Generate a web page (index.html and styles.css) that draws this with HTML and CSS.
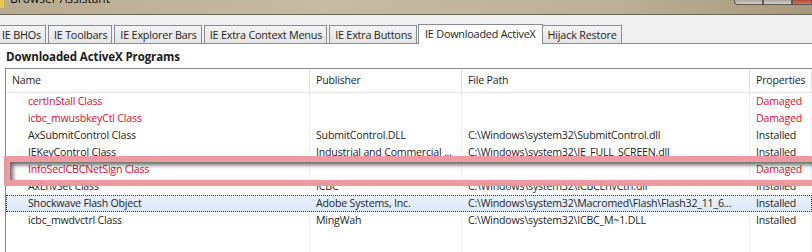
FILE: index.html
```html
<!DOCTYPE html>
<html lang="en">
<head>
  <meta charset="UTF-8">
  <title>Browser Assistant</title>
  <link rel="stylesheet" href="styles.css">
</head>
<body>
  <div class="window">
    <!-- title bar, mostly scrolled off the top -->
    <div class="titlebar">
      <span class="app-icon"></span>
      <span class="title">Browser Assistant</span>
      <div class="caption-btns">
        <span class="cap-btn"></span>
        <span class="cap-btn"></span>
        <span class="cap-btn close"></span>
      </div>
    </div>

    <div class="tabs">
      <div class="tab">IE BHOs</div>
      <div class="tab">IE Toolbars</div>
      <div class="tab">IE Explorer Bars</div>
      <div class="tab">IE Extra Context Menus</div>
      <div class="tab">IE Extra Buttons</div>
      <div class="tab active">IE Downloaded ActiveX</div>
      <div class="tab">Hijack Restore</div>
    </div>

    <div class="page">
      <h2>Downloaded ActiveX Programs</h2>

      <div class="list">
        <div class="row head">
          <div class="cell">Name</div>
          <div class="cell">Publisher</div>
          <div class="cell">File Path</div>
          <div class="cell">Properties</div>
        </div>
        <div class="row damaged">
          <div class="cell">certInStall Class</div>
          <div class="cell"></div>
          <div class="cell"></div>
          <div class="cell">Damaged</div>
        </div>
        <div class="row damaged">
          <div class="cell">icbc_mwusbkeyCtl Class</div>
          <div class="cell"></div>
          <div class="cell"></div>
          <div class="cell">Damaged</div>
        </div>
        <div class="row">
          <div class="cell">AxSubmitControl Class</div>
          <div class="cell">SubmitControl.DLL</div>
          <div class="cell">C:\Windows\system32\SubmitControl.dll</div>
          <div class="cell">Installed</div>
        </div>
        <div class="row">
          <div class="cell">IEKeyControl Class</div>
          <div class="cell">Industrial and Commercial ...</div>
          <div class="cell">C:\Windows\system32\IE_FULL_SCREEN.dll</div>
          <div class="cell">Installed</div>
        </div>
        <div class="row damaged">
          <div class="cell">InfoSecICBCNetSign Class</div>
          <div class="cell"></div>
          <div class="cell"></div>
          <div class="cell">Damaged</div>
        </div>
        <div class="row">
          <div class="cell">AxEnvSet Class</div>
          <div class="cell">ICBC</div>
          <div class="cell">C:\Windows\system32\ICBCEnvCtrl.dll</div>
          <div class="cell">Installed</div>
        </div>
        <div class="row selected">
          <div class="cell">Shockwave Flash Object</div>
          <div class="cell">Adobe Systems, Inc.</div>
          <div class="cell">C:\Windows\system32\Macromed\Flash\Flash32_11_6...</div>
          <div class="cell">Installed</div>
        </div>
        <div class="row">
          <div class="cell">icbc_mwdvctrl Class</div>
          <div class="cell">MingWah</div>
          <div class="cell">C:\Windows\system32\ICBC_M~1.DLL</div>
          <div class="cell">Installed</div>
        </div>
        <div class="row filler">
          <div class="cell"></div>
          <div class="cell"></div>
          <div class="cell"></div>
          <div class="cell"></div>
        </div>

        <!-- annotation frame drawn over the damaged entry -->
        <div class="mark"></div>
      </div>
    </div>
  </div>
</body>
</html>
```

FILE: styles.css
```css
body {
  margin: 0;
  background: #f0f0f0;
  font-family: "Open Sans", "Noto Sans", sans-serif;
  font-size: 10.6px;
  letter-spacing: -0.2px;
  color: #1e1e1e;
}

.window {
  width: 812px;
  height: 252px;
  overflow: hidden;
  display: flex;
  flex-direction: column;
  background: #f0f0f0;
}

/* title bar */
.titlebar {
  flex-shrink: 0;
  height: 14px;
  display: flex;
  align-items: flex-start;
  background: linear-gradient(90deg, #b9ab90, #c7bba3 40%, #bdb096 75%, #a8997c);
  border-bottom: 1px solid #6a655c;
  overflow: hidden;
}

.app-icon {
  width: 4px;
  height: 8px;
  background: #e8c84a;
}

.title {
  margin-left: 6px;
  margin-top: -9px;
  font-size: 12px;
  line-height: 16px;
  letter-spacing: 0;
  color: #111;
}

.caption-btns {
  margin-left: auto;
  display: flex;
  height: 5px;
}

.cap-btn {
  width: 27px;
  height: 4px;
  border: 1px solid #5c5a56;
  border-top: none;
  background: linear-gradient(#aaa59c, #d6d2ca);
}

.cap-btn:first-child {
  border-radius: 0 0 0 4px;
}

.cap-btn.close {
  width: 18px;
  background: linear-gradient(#b24a36, #d8745c);
}

/* tab strip */
.tabs {
  flex-shrink: 0;
  display: flex;
  align-items: flex-end;
  padding-top: 9px;
  border-bottom: 1px solid #898c95;
  height: 19px;
}

.tab {
  height: 17px;
  line-height: 17px;
  padding: 0 4px 0 5px;
  margin-right: 2px;
  border: 1px solid #898c95;
  border-bottom: none;
  background: linear-gradient(#f4f4f4, #e4e4e4);
  white-space: nowrap;
  font-size: 10.8px;
}

.tab:first-child {
  border-left: none;
  padding-left: 2px;
}

.tab.active {
  height: 19px;
  line-height: 17px;
  padding: 0 6px;
  margin: 0 -1px -1px -1px;
  background: #fff;
  position: relative;
  z-index: 1;
}

/* tab page */
.page {
  flex: 1;
  min-height: 0;
  background: #fff;
  padding: 6px 0 0 5px;
}

h2 {
  margin: 0 0 5px 1px;
  font-size: 11.5px;
  line-height: 13px;
  font-weight: bold;
  letter-spacing: -0.1px;
  color: #1a1a1a;
}

.list {
  position: relative;
  border: 1px solid #828790;
  border-right: none;
  background: #fff;
}

.row {
  display: grid;
  grid-template-columns: 304px 152px 288px 1fr;
  height: 17px;
  line-height: 17px;
}

.cell {
  padding-left: 6px;
  border-right: 1px solid #f0f0f0;
  white-space: nowrap;
  overflow: hidden;
}

.row .cell:first-child {
  padding-left: 22px;
}

.row.head {
  height: 23px;
  line-height: 23px;
  border-bottom: 1px solid #e5e5e5;
}

.row.head .cell {
  border-right-color: #e3e3e3;
}

.row.head .cell:first-child {
  padding-left: 6px;
}

.row.damaged {
  color: #e0102c;
}

.row.selected {
  background: linear-gradient(#eaf2fc, #dce9f8);
  outline: 1px dotted #333;
  outline-offset: -1px;
}

.row.selected .cell {
  border-right-color: transparent;
}

.row.filler {
  height: 40px;
}

.mark {
  position: absolute;
  top: 87px;
  left: -2px;
  right: 0;
  height: 18px;
  border: 6px solid rgba(236, 150, 158, 0.95);
  border-right: none;
  box-shadow: inset 3px 3px 4px rgba(50, 50, 50, 0.75);
}
```
